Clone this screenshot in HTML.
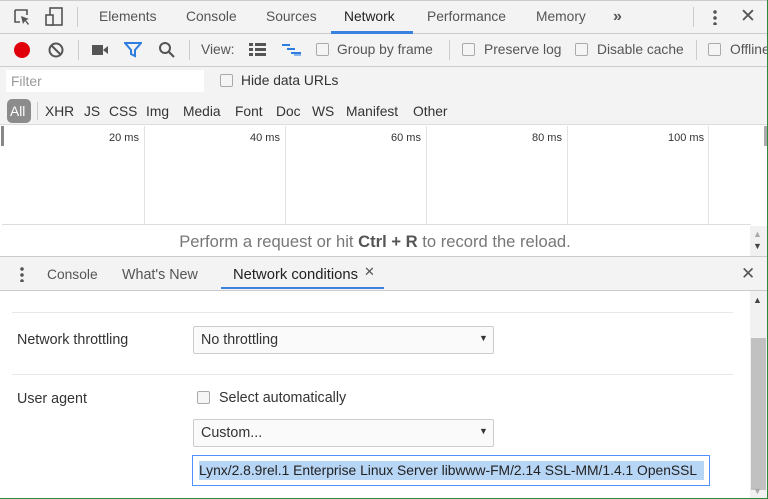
<!DOCTYPE html>
<html><head><meta charset="utf-8"><style>
*{box-sizing:border-box;margin:0;padding:0}
body{width:768px;height:499px;overflow:hidden;position:relative;background:#fff;font-family:"Liberation Sans",sans-serif;font-size:13.8px;color:#333}
.a{position:absolute;white-space:nowrap}
.bar{position:absolute;left:0;width:767px;background:#f3f3f3;border-bottom:1px solid #ccc}
.cb{position:absolute;width:13px;height:13px;border:1px solid #aaa;border-radius:2px;background:#f5f5f5}
.sep{position:absolute;width:1px;background:#ccc}
.g{color:#555}
</style></head><body>
<div class="bar" style="top:0;height:34px;border-top:1px solid #ccc"></div>
<svg class="a" style="left:12px;top:7px" width="20" height="20" viewBox="0 0 20 20"><path d="M3 3h12v5M3 3v12h5" fill="none" stroke="#555" stroke-width="1.6"/><path d="M9 9l8 3-3 1 3 4-1 1-3-4-2 3z" fill="#555"/></svg>
<svg class="a" style="left:44px;top:6px" width="20" height="22" viewBox="0 0 20 22"><rect x="6" y="2" width="12" height="17" fill="none" stroke="#555" stroke-width="1.6"/><rect x="2" y="9" width="7" height="10" fill="#f3f3f3" stroke="#555" stroke-width="1.6"/></svg>
<div class="sep" style="left:77px;top:7px;height:20px"></div>
<div class="a g" style="left:99px;top:9px">Elements</div>
<div class="a g" style="left:186px;top:9px">Console</div>
<div class="a g" style="left:266px;top:9px">Sources</div>
<div class="a" style="left:344px;top:9px;color:#222">Network</div>
<div class="a" style="left:331px;top:31px;width:82px;height:3px;background:#3b82e0"></div>
<div class="a g" style="left:427px;top:9px">Performance</div>
<div class="a g" style="left:536px;top:9px">Memory</div>
<div class="a" style="left:613px;top:8px;font-size:16px;color:#555;font-weight:bold">»</div>
<div class="sep" style="left:693px;top:7px;height:20px"></div>
<div class="a" style="left:713px;top:9px;width:4px;height:16px;background:radial-gradient(circle,#555 1.6px,transparent 2px) 0 0/4px 6px"></div>
<div class="a" style="left:740px;top:5px;font-size:19px;color:#555">✕</div>
<div class="bar" style="top:34px;height:33px"></div>
<div class="a" style="left:14px;top:42px;width:16px;height:16px;border-radius:50%;background:#e0000c"></div>
<svg class="a" style="left:47px;top:41px" width="18" height="18"><circle cx="9" cy="9" r="6.5" fill="none" stroke="#555" stroke-width="2"/><path d="M4.5 4.5l9 9" stroke="#555" stroke-width="2"/></svg>
<div class="sep" style="left:78px;top:40px;height:20px"></div>
<svg class="a" style="left:91px;top:43px" width="18" height="14"><rect x="1" y="2" width="11" height="10" fill="#555"/><path d="M12 7l5-4v8z" fill="#555"/></svg>
<svg class="a" style="left:124px;top:42px" width="18" height="16"><path d="M1 1h16l-6 7v6l-4-2v-4z" fill="none" stroke="#2d7ee0" stroke-width="2"/></svg>
<svg class="a" style="left:158px;top:41px" width="18" height="18"><circle cx="7" cy="7" r="5" fill="none" stroke="#555" stroke-width="2"/><path d="M11 11l5 5" stroke="#555" stroke-width="2.2"/></svg>
<div class="sep" style="left:189px;top:40px;height:20px"></div>
<div class="a g" style="left:201px;top:42px">View:</div>
<svg class="a" style="left:249px;top:43px" width="18" height="13" fill="#555"><rect x="0" y="0" width="4" height="3"/><rect x="6" y="0" width="11" height="3"/><rect x="0" y="5" width="4" height="3"/><rect x="6" y="5" width="11" height="3"/><rect x="0" y="10" width="4" height="3"/><rect x="6" y="10" width="11" height="3"/></svg>
<svg class="a" style="left:282px;top:44px" width="20" height="12" fill="#2d7ee0"><rect x="0" y="0" width="8" height="2"/><rect x="5" y="4" width="8" height="2"/><rect x="9" y="8" width="10" height="2"/><rect x="12" y="10" width="7" height="2" fill="#8ab4ea"/></svg>
<div class="cb" style="left:316px;top:43px"></div>
<div class="a g" style="left:337px;top:42px">Group by frame</div>
<div class="sep" style="left:449px;top:40px;height:20px"></div>
<div class="cb" style="left:462px;top:43px"></div>
<div class="a g" style="left:484px;top:42px">Preserve log</div>
<div class="cb" style="left:575px;top:43px"></div>
<div class="a g" style="left:597px;top:42px">Disable cache</div>
<div class="sep" style="left:696px;top:40px;height:20px"></div>
<div class="cb" style="left:708px;top:43px"></div>
<div class="a g" style="left:730px;top:42px">Offline</div>
<div class="a" style="left:0;top:67px;width:767px;height:58px;background:#f3f3f3;border-bottom:1px solid #ddd"></div>
<div class="a" style="left:6px;top:70px;width:198px;height:22px;background:#fff"></div>
<div class="a" style="left:11px;top:74px;color:#999">Filter</div>
<div class="cb" style="left:220px;top:74px"></div>
<div class="a" style="left:241px;top:73px;color:#333">Hide data URLs</div>
<div class="a" style="left:7px;top:99px;width:24px;height:24px;border-radius:5px;background:#8c8c8c"></div>
<div class="a" style="left:10px;top:104px;color:#fff">All</div>
<div class="sep" style="left:37px;top:102px;height:18px"></div>
<div class="a" style="left:45px;top:104px">XHR</div>
<div class="a" style="left:84px;top:104px">JS</div>
<div class="a" style="left:109px;top:104px">CSS</div>
<div class="a" style="left:146px;top:104px">Img</div>
<div class="a" style="left:183px;top:104px">Media</div>
<div class="a" style="left:235px;top:104px">Font</div>
<div class="a" style="left:276px;top:104px">Doc</div>
<div class="a" style="left:312px;top:104px">WS</div>
<div class="a" style="left:346px;top:104px">Manifest</div>
<div class="a" style="left:413px;top:104px">Other</div>
<div class="a" style="left:2px;top:126px;width:749px;height:99px;border-bottom:1px solid #ddd"></div>
<div class="sep" style="left:144px;top:126px;height:99px;background:#e3e3e3"></div>
<div class="sep" style="left:285px;top:126px;height:99px;background:#e3e3e3"></div>
<div class="sep" style="left:426px;top:126px;height:99px;background:#e3e3e3"></div>
<div class="sep" style="left:567px;top:126px;height:99px;background:#e3e3e3"></div>
<div class="sep" style="left:708px;top:126px;height:99px;background:#e3e3e3"></div>
<div class="a" style="left:109px;top:132px;font-size:11px">20 ms</div>
<div class="a" style="left:250px;top:132px;font-size:11px">40 ms</div>
<div class="a" style="left:391px;top:132px;font-size:11px">60 ms</div>
<div class="a" style="left:532px;top:132px;font-size:11px">80 ms</div>
<div class="a" style="left:668px;top:132px;font-size:11px">100 ms</div>
<div class="a" style="left:1px;top:126px;width:3px;height:20px;background:#888"></div>
<div class="a" style="left:764px;top:126px;width:3px;height:20px;background:#aaa"></div>
<div class="a" style="left:0;top:232px;width:750px;text-align:center;font-size:16.6px;color:#777">Perform a request or hit <b style="color:#555">Ctrl + R</b> to record the reload.</div>
<div class="a" style="left:750px;top:226px;width:17px;height:30px;background:#f1f1f1"></div>
<div class="a" style="left:753px;top:229px;font-size:9px;color:#aaa">▲</div>
<div class="a" style="left:753px;top:241px;font-size:9px;color:#444">▼</div>
<div class="bar" style="top:256px;height:35px;border-top:1px solid #ccc"></div>
<div class="a" style="left:20px;top:266px;width:4px;height:16px;background:radial-gradient(circle,#555 1.6px,transparent 2px) 0 0/4px 6px"></div>
<div class="a g" style="left:47px;top:267px">Console</div>
<div class="a g" style="left:122px;top:267px;font-size:14.3px">What's New</div>
<div class="a" style="left:233px;top:267px;color:#222;font-size:14.8px">Network conditions</div>
<div class="a" style="left:364px;top:264px;font-size:13px;color:#555">✕</div>
<div class="a" style="left:221px;top:287px;width:163px;height:2px;background:#3b82e0"></div>
<div class="a" style="left:741px;top:264px;font-size:17px;color:#555">✕</div>
<div class="a" style="left:12px;top:312px;width:721px;height:1px;background:#e8e8e8"></div>
<div class="a" style="left:17px;top:332px;font-size:14.3px">Network throttling</div>
<div class="a" style="left:193px;top:326px;width:301px;height:28px;border:1px solid #ccc;border-radius:2px;background:#fafafa"></div>
<div class="a" style="left:201px;top:332px;font-size:14.3px">No throttling</div>
<div class="a" style="left:479px;top:333px;font-size:9px">▼</div>
<div class="a" style="left:12px;top:374px;width:721px;height:1px;background:#e8e8e8"></div>
<div class="a" style="left:17px;top:391px;font-size:14.3px">User agent</div>
<div class="cb" style="left:197px;top:391px"></div>
<div class="a" style="left:219px;top:390px;font-size:14.3px">Select automatically</div>
<div class="a" style="left:193px;top:419px;width:301px;height:28px;border:1px solid #ccc;border-radius:2px;background:#fafafa"></div>
<div class="a" style="left:201px;top:425px;font-size:14.3px">Custom...</div>
<div class="a" style="left:479px;top:426px;font-size:9px">▼</div>
<div class="a" style="left:192px;top:455px;width:518px;height:31px;border:1px solid #4d90fe;background:#fff"></div>
<div class="a" style="left:199px;top:461px;height:19px;padding-top:1px;background:#b7d5f5;color:#222;font-size:13.85px;width:505px;overflow:hidden">Lynx/2.8.9rel.1 Enterprise Linux Server libwww-FM/2.14 SSL-MM/1.4.1 OpenSSL</div>
<div class="a" style="left:750px;top:291px;width:17px;height:207px;background:#f1f1f1"></div>
<div class="a" style="left:753px;top:295px;font-size:9px;color:#444">▲</div>
<div class="a" style="left:751px;top:338px;width:15px;height:152px;background:#c1c1c1"></div>
<div class="a" style="left:753px;top:486px;font-size:9px;color:#aaa">▼</div>
<div class="a" style="left:767px;top:0;width:1px;height:499px;background:#2c8a3c"></div>
<div class="a" style="left:0;top:498px;width:768px;height:1px;background:#2c8a3c"></div>
</body></html>
